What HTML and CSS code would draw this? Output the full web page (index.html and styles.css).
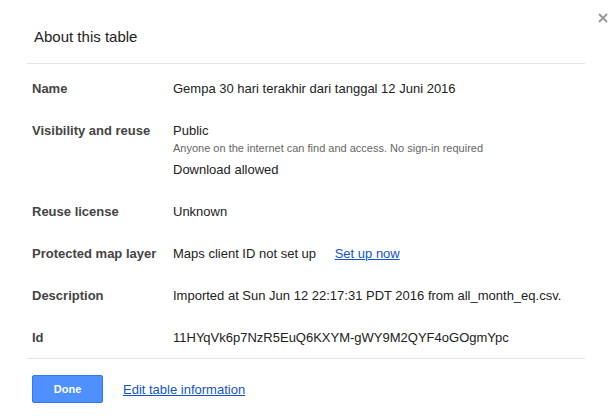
FILE: index.html
```html
<!DOCTYPE html>
<html lang="en">
    <head>
        <meta charset="utf-8">
        <link rel="stylesheet" href="styles.css">
    </head>
    <body>
        <div class="dialog">
            <div class="close" title="Close">
                <svg width="10" height="10" viewBox="0 0 10 10">
                    <path d="M1 1L9 9M9 1L1 9" stroke="#9a9a9a" stroke-width="2"/>
                </svg>
            </div>
            <div class="title">About this table</div>
            <div class="rows">
                <div class="row">
                    <div class="label">Name</div>
                    <div class="value">Gempa 30 hari terakhir dari tanggal 12 Juni 2016</div>
                </div>
                <div class="row">
                    <div class="label">Visibility and reuse</div>
                    <div class="value">
                        <div>Public</div>
                        <div class="hint">Anyone on the internet can find and access. No sign-in required</div>
                        <div class="extra">Download allowed</div>
                    </div>
                </div>
                <div class="row">
                    <div class="label">Reuse license</div>
                    <div class="value">Unknown</div>
                </div>
                <div class="row">
                    <div class="label">Protected map layer</div>
                    <div class="value">Maps client ID not set up <a href="#" class="setup">Set up now</a></div>
                </div>
                <div class="row">
                    <div class="label">Description</div>
                    <div class="value">Imported at Sun Jun 12 22:17:31 PDT 2016 from all_month_eq.csv.</div>
                </div>
                <div class="row">
                    <div class="label">Id</div>
                    <div class="value">11HYqVk6p7NzR5EuQ6KXYM-gWY9M2QYF4oGOgmYpc</div>
                </div>
            </div>
            <div class="footer">
                <button class="done">Done</button>
                <a href="#" class="edit">Edit table information</a>
            </div>
        </div>
    </body>
</html>
```

FILE: styles.css
```css
body{
    margin: 0;
    background: #fff;
    font-family: "Liberation Sans", Arial, sans-serif;
    color: #222;
}
.dialog{
    position: relative;
    width: 558px;
    margin-left: 27px;
}
.close{
    position: absolute;
    top: 13px;
    right: -23px;
    width: 10px;
    height: 10px;
    cursor: pointer;
}
.close svg{
    display: block;
}
.title{
    padding: 27px 0 16px 7px;
    font-size: 15px;
    line-height: 20px;
    color: #222;
    border-bottom: 1px solid #e5e5e5;
}
.rows{
    padding: 17px 0 12px 5px;
    border-bottom: 1px solid #e5e5e5;
}
.row{
    display: flex;
    font-size: 13px;
    line-height: 16px;
    margin-bottom: 26px;
}
.row:last-child{
    margin-bottom: 0;
}
.label{
    width: 141px;
    flex: none;
    font-weight: bold;
    color: #444;
}
.value{
    color: #222;
}
.hint{
    margin-top: 2px;
    font-size: 11px;
    line-height: 14px;
    color: #666;
}
.extra{
    margin-top: 7px;
}
.setup{
    margin-left: 15px;
    color: #15c;
}
.footer{
    display: flex;
    align-items: center;
    padding: 16px 0 0 5px;
}
.done{
    width: 71px;
    height: 28px;
    margin: 0 20px 0 0;
    padding: 0;
    border: 1px solid #3079ed;
    border-radius: 2px;
    background: #4d90fe;
    color: #fff;
    font-family: "Liberation Sans", Arial, sans-serif;
    font-size: 11px;
    font-weight: bold;
    cursor: pointer;
}
.edit{
    font-size: 13px;
    color: #15c;
}
```
